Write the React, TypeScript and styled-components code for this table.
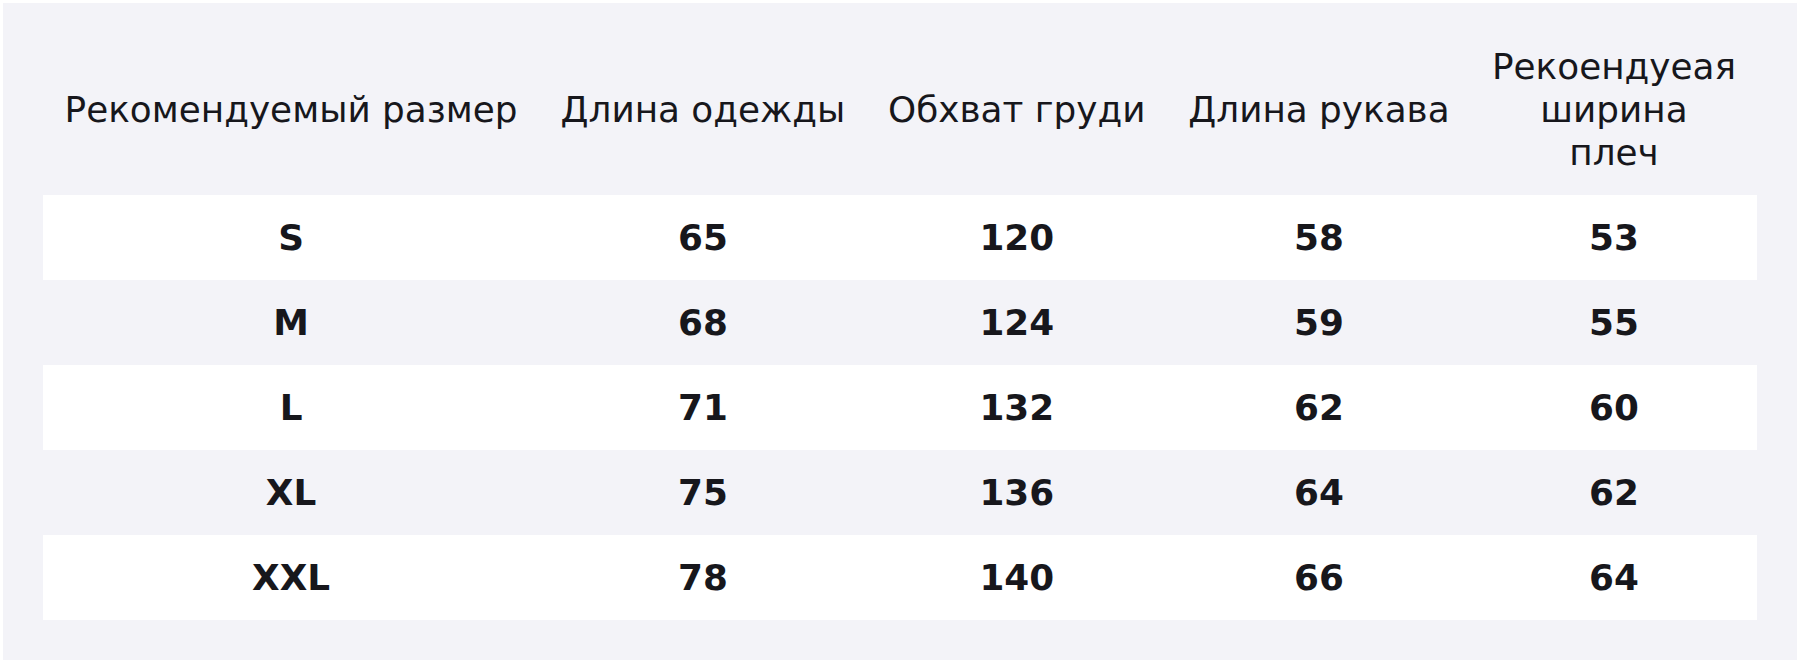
import styled, { createGlobalStyle } from "styled-components";

const GlobalStyle = createGlobalStyle`
  body {
    margin: 0;
    background: #ffffff;
    font-family: "DejaVu Sans", "Liberation Sans", sans-serif;
    color: #17171c;
  }
`;

const Panel = styled.section`
  margin: 3px;
  padding: 21px 40px 40px;
  background: #f3f3f8;
`;

const Table = styled.table`
  width: 100%;
  border-collapse: collapse;
  font-size: 35.8px;
  line-height: 43px;
  text-align: center;
`;

/* the last heading is squeezed to its longest word, the others stay on one line */
const HeadCell = styled.th<{ $wrap?: boolean }>`
  padding: 21px;
  font-weight: 400;
  white-space: ${(p) => (p.$wrap ? "normal" : "nowrap")};
  width: ${(p) => (p.$wrap ? "1%" : "auto")};
`;

const Row = styled.tr<{ $striped: boolean }>`
  background: ${(p) => (p.$striped ? "#ffffff" : "transparent")};
`;

const Cell = styled.td`
  padding: 21px;
  font-weight: 700;
`;

const headers = [
  "Рекомендуемый размер",
  "Длина одежды",
  "Обхват груди",
  "Длина рукава",
  "Рекоендуеая ширина плеч",
];

const rows = [
  ["S", "65", "120", "58", "53"],
  ["M", "68", "124", "59", "55"],
  ["L", "71", "132", "62", "60"],
  ["XL", "75", "136", "64", "62"],
  ["XXL", "78", "140", "66", "64"],
];

export default function App() {
  return (
    <>
      <GlobalStyle />
      <Panel>
        <Table>
          <thead>
            <tr>
              {headers.map((h, i) => (
                <HeadCell key={h} $wrap={i === headers.length - 1}>
                  {h}
                </HeadCell>
              ))}
            </tr>
          </thead>
          <tbody>
            {rows.map((r, i) => (
              <Row key={r[0]} $striped={i % 2 === 0}>
                {r.map((v, j) => (
                  <Cell key={j}>{v}</Cell>
                ))}
              </Row>
            ))}
          </tbody>
        </Table>
      </Panel>
    </>
  );
}
